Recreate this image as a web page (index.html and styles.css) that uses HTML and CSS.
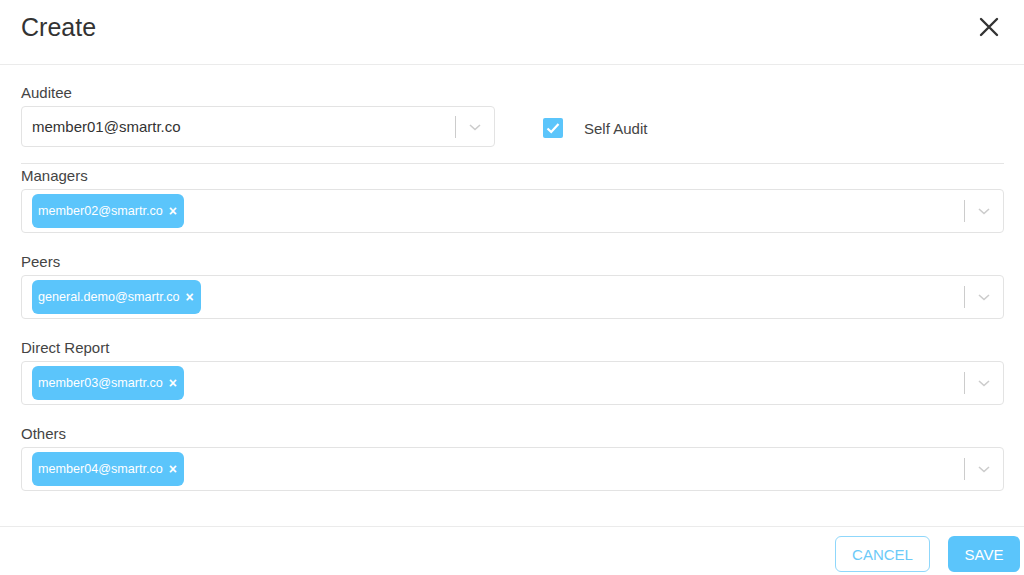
FILE: index.html
```html
<!DOCTYPE html>
<html lang="en">
<head>
    <meta charset="UTF-8">
    <meta name="viewport" content="width=device-width, initial-scale=1.0">
    <title>Create</title>
    <link rel="stylesheet" href="styles.css">
</head>
<body>

    <div class="modal">
        <div class="modal-header">
            <h1>Create</h1>
            <button class="close-btn" aria-label="Close">
                <svg width="20" height="20" viewBox="0 0 20 20"><path d="M2 2 L18 18 M18 2 L2 18" stroke="#333" stroke-width="2.4" stroke-linecap="round"/></svg>
            </button>
        </div>

        <div class="modal-body">
            <label class="field-label">Auditee</label>
            <div class="auditee-row">
                <div class="select single">
                    <div class="value">member01@smartr.co</div>
                    <span class="sep"></span>
                    <span class="arrow"><svg width="20" height="20" viewBox="0 0 20 20"><polyline points="5,8 10,12.5 15,8" fill="none" stroke="#ccc" stroke-width="1.6"/></svg></span>
                </div>
                <label class="self-audit">
                    <span class="check"><svg width="16" height="16" viewBox="0 0 16 16"><polyline points="2.5,8.5 6.2,12 13.5,4" fill="none" stroke="#fff" stroke-width="2.2"/></svg></span>
                    Self Audit
                </label>
            </div>
            <hr class="divider">

            <label class="field-label">Managers</label>
            <div class="select multi">
                <div class="chips"><span class="chip">member02@smartr.co <b>×</b></span></div>
                <span class="sep"></span>
                <span class="arrow"><svg width="20" height="20" viewBox="0 0 20 20"><polyline points="5,8 10,12.5 15,8" fill="none" stroke="#ccc" stroke-width="1.6"/></svg></span>
            </div>

            <label class="field-label">Peers</label>
            <div class="select multi">
                <div class="chips"><span class="chip">general.demo@smartr.co <b>×</b></span></div>
                <span class="sep"></span>
                <span class="arrow"><svg width="20" height="20" viewBox="0 0 20 20"><polyline points="5,8 10,12.5 15,8" fill="none" stroke="#ccc" stroke-width="1.6"/></svg></span>
            </div>

            <label class="field-label">Direct Report</label>
            <div class="select multi">
                <div class="chips"><span class="chip">member03@smartr.co <b>×</b></span></div>
                <span class="sep"></span>
                <span class="arrow"><svg width="20" height="20" viewBox="0 0 20 20"><polyline points="5,8 10,12.5 15,8" fill="none" stroke="#ccc" stroke-width="1.6"/></svg></span>
            </div>

            <label class="field-label">Others</label>
            <div class="select multi">
                <div class="chips"><span class="chip">member04@smartr.co <b>×</b></span></div>
                <span class="sep"></span>
                <span class="arrow"><svg width="20" height="20" viewBox="0 0 20 20"><polyline points="5,8 10,12.5 15,8" fill="none" stroke="#ccc" stroke-width="1.6"/></svg></span>
            </div>
        </div>

        <div class="modal-footer">
            <button class="btn-cancel">CANCEL</button>
            <button class="btn-save">SAVE</button>
        </div>
    </div>

</body>
</html>
```

FILE: styles.css
```css
body {
    font-family: "Liberation Sans", Arial, sans-serif;
    background-color: #fff;
    margin: 0;
    padding: 0;
    color: #333;
}
.modal {
    width: 1024px;
}
.modal-header {
    height: 65px;
    border-bottom: 1px solid #ebebeb;
    display: flex;
    justify-content: space-between;
    align-items: flex-start;
    padding: 0 25px 0 21px;
    box-sizing: border-box;
}
.modal-header h1 {
    margin: 0;
    padding-top: 12px;
    font-size: 25px;
    line-height: 30px;
    font-weight: normal;
    color: #333;
}
.close-btn {
    background: none;
    border: none;
    padding: 0;
    margin-top: 17px;
    cursor: pointer;
}
.modal-body {
    padding: 20px 20px 14px 21px;
}
.field-label {
    display: block;
    font-size: 15px;
    line-height: 16px;
    color: #444;
    margin-bottom: 5px;
}
.auditee-row {
    display: flex;
    align-items: center;
}
.select {
    display: flex;
    align-items: center;
    border: 1px solid #e3e3e3;
    border-radius: 4px;
    box-sizing: border-box;
    background: #fff;
}
.select.single {
    width: 474px;
    height: 41px;
}
.select.multi {
    height: 44px;
    margin-bottom: 21px;
}
.value {
    flex: 1;
    padding-left: 10px;
    font-size: 15px;
    color: #333;
}
.chips {
    flex: 1;
    padding-left: 10px;
}
.chip {
    display: inline-flex;
    align-items: center;
    height: 34px;
    padding: 0 7px 0 6px;
    background-color: #5bc5fb;
    color: #fff;
    font-size: 12.6px;
    border-radius: 6px;
    box-sizing: border-box;
}
.chip b {
    margin-left: 6px;
    font-size: 14px;
}
.sep {
    width: 1px;
    height: 22px;
    background: #ccc;
}
.arrow {
    display: flex;
    padding: 0 9px 0 9px;
}
.self-audit {
    display: flex;
    align-items: center;
    margin-left: 48px;
    margin-top: 3px;
    font-size: 15px;
    color: #444;
}
.check {
    width: 20px;
    height: 20px;
    border-radius: 2px;
    background-color: #5bc5fb;
    display: flex;
    align-items: center;
    justify-content: center;
    margin-right: 21px;
}
.divider {
    border: none;
    border-top: 1px solid #e5e5e5;
    margin: 16px 0 4px 0;
}
.modal-footer {
    border-top: 1px solid #ebebeb;
    display: flex;
    justify-content: flex-end;
    padding: 9px 4px 0 0;
}
.btn-cancel, .btn-save {
    font-family: "Liberation Sans", Arial, sans-serif;
    font-size: 15px;
    height: 36px;
    border-radius: 6px;
    cursor: pointer;
}
.btn-cancel {
    width: 95px;
    background: #fff;
    border: 1px solid #8fd7fb;
    color: #6ccaf8;
}
.btn-save {
    width: 72px;
    margin-left: 18px;
    background-color: #5bc5fb;
    border: none;
    color: #fff;
}
```
